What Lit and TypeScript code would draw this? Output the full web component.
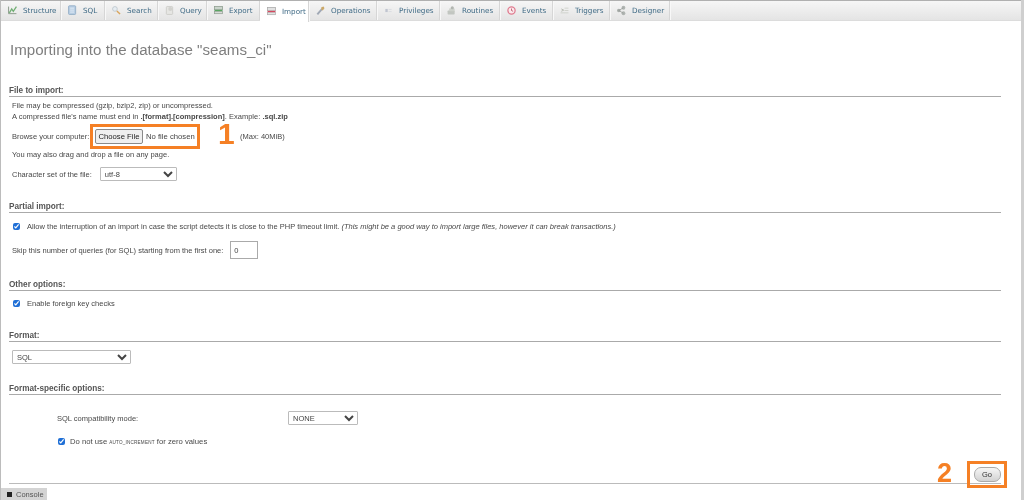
import { LitElement, html, css, svg } from "lit";
import { customElement } from "lit/decorators.js";

const icons: Record<string, unknown> = {
  Structure: svg`<path d="M2 2v9h10" fill="none" stroke="#8a9a8a" stroke-width="1.2"/><path d="M3 10l3-5 2 3 4-6" fill="none" stroke="#6fae72" stroke-width="1.6"/>`,
  SQL: svg`<rect x="2" y="1" width="9" height="11" rx="1" fill="#b9cfe4" stroke="#8ba7c2"/><path d="M4 4h5M4 6.5h5M4 9h5" stroke="#e8f0f8"/>`,
  Search: svg`<circle cx="5" cy="5" r="3" fill="#e6edf2" stroke="#b9c2c8"/><path d="M7.5 7.5l4 4" stroke="#d9a55c" stroke-width="1.8"/>`,
  Query: svg`<rect x="3" y="2" width="8" height="10" rx="1" fill="#e6e6e3" stroke="#c8c8c4"/><circle cx="8" cy="5" r="2.6" fill="#d2d2ce"/>`,
  Export: svg`<rect x="2" y="2" width="10" height="4" fill="#cbd5cc" stroke="#8f9e90"/><rect x="2" y="8" width="10" height="3" fill="#d8dcd8" stroke="#98a299"/><path d="M2 7h10" stroke="#5aa562" stroke-width="1.6"/>`,
  Import: svg`<rect x="2" y="2" width="10" height="4" fill="#e2e2e2" stroke="#aaa"/><rect x="2" y="8" width="10" height="3" fill="#e4e4e4" stroke="#b0b0b0"/><path d="M2 7h10" stroke="#d6485e" stroke-width="1.6"/>`,
  Operations: svg`<path d="M3 12l6-7" stroke="#a0a8b5" stroke-width="2.4"/><path d="M8 3l3-1 1 2-2 3-2-1z" fill="#cba868"/>`,
  Privileges: svg`<rect x="3" y="5" width="3" height="4" fill="#c0c5d0"/><rect x="7" y="5" width="4" height="1" fill="#d6d8de"/><rect x="7" y="8" width="4" height="1" fill="#d6d8de"/>`,
  Routines: svg`<rect x="2" y="7" width="9" height="5" rx="1" fill="#c2c6c1"/><rect x="4" y="4" width="7" height="4" rx="1" fill="#ced2cc"/><circle cx="8" cy="3.5" r="2" fill="#b2b6b1"/>`,
  Events: svg`<circle cx="7" cy="7" r="4.6" fill="#fbe9ec" stroke="#e07c90" stroke-width="1.6"/><path d="M7 4.5V7l2 1" fill="none" stroke="#b8475c"/>`,
  Triggers: svg`<path d="M3 5l3 1.5L3 8" fill="none" stroke="#b6bab0" stroke-width="1.2"/><path d="M7 4h5M7 7h5M2 10h10" stroke="#c9ccc4"/>`,
  Designer: svg`<circle cx="3.5" cy="7" r="2.2" fill="#a8adaa"/><circle cx="9.5" cy="3.5" r="2.4" fill="#b0b5b2"/><circle cx="9.5" cy="10.5" r="2.4" fill="#b0b5b2"/><path d="M3.5 7l6-3.5M3.5 7l6 3.5" stroke="#969b98"/>`,
};

const tabs = Object.keys(icons);
const widths = [60, 44, 53, 49, 53, 49, 68, 63, 60, 53, 57, 60];

@customElement("app-root")
export class AppRoot extends LitElement {
  static styles = css`
    :host {
      display: block;
      position: relative;
      width: 1024px;
      height: 500px;
      overflow: hidden;
      background: #fff;
      font-family: "Liberation Sans", Arial, sans-serif;
      font-size: 7.52px;
      color: #484848;
      filter: blur(0.3px);
    }
    .frame {
      box-sizing: border-box;
      height: 500px;
      width: 1024px;
      border-left: 1px solid #bcbcbc;
      border-right: 3px solid #cfcfcf;
      display: flex;
      flex-direction: column;
    }
    .tabs {
      display: flex;
      height: 21px;
      flex: none;
      box-sizing: border-box;
      border-top: 1px solid #b0b0b0;
      border-bottom: 1px solid #dcdcdc;
      background: linear-gradient(#f6f6f6, #e4e4e4);
    }
    .tab {
      display: flex;
      align-items: center;
      gap: 5px;
      flex: none;
      box-sizing: border-box;
      padding-left: 6px;
      border-right: 1px solid #d6d6d6;
      box-shadow: 1px 0 0 #f8f8f8;
      font-family: "DejaVu Sans", sans-serif;
      font-size: 7.2px;
      color: #3f6a85;
      white-space: nowrap;
    }
    .tab.on {
      background: #fff;
      height: 21px;
    }
    .tab svg {
      width: 11px;
      height: 11px;
      flex: none;
    }
    h1 {
      margin: 20px 0 0 9px;
      font-size: 15.1px;
      line-height: 18px;
      font-weight: 400;
      color: #7e7e7e;
    }
    main {
      flex: 1;
      padding: 0 20px 0 8px;
      display: flex;
      flex-direction: column;
    }
    .legend {
      font-weight: 700;
      font-size: 8.2px;
      line-height: 10px;
      color: #555;
      border-bottom: 1px solid #aaa;
    }
    .sec {
      display: flex;
      flex-direction: column;
    }
    .file { margin-top: 27px; }
    .partial { margin-top: 21px; }
    .other { margin-top: 20px; }
    .format { margin-top: 23px; }
    .specific { margin-top: 20px; }
    .row {
      display: flex;
      align-items: center;
      padding-left: 3px;
      white-space: nowrap;
    }
    .lines {
      line-height: 11px;
      margin-top: 3px;
    }
    .browse { height: 24px; margin-top: 2px; }
    .browse .lab { width: 83px; flex: none; }
    input[type="file"] {
      font: inherit;
      font-size: 7.7px;
      width: 110px;
      flex: none;
      color: #444;
      margin: 0;
    }
    input[type="file"]::file-selector-button {
      font: inherit;
      height: 15px;
      width: 48px;
      padding: 0;
      margin-right: 3px;
      border: 1px solid #8a8a8a;
      border-radius: 2px;
      background: #efefef;
      color: #222;
    }
    .max { margin-left: 35px; }
    .drop { margin-top: 1px; line-height: 11px; }
    .charset { margin-top: 7px; gap: 8px; height: 14px; }
    select {
      font: inherit;
      color: #444;
      height: 14px;
      padding: 0;
      margin: 0;
      border: 1px solid #bbb;
      border-radius: 1px;
      background: #fff;
      box-sizing: border-box;
    }
    .w-cs { width: 77px; }
    .w-fmt { width: 119px; }
    .w-none { width: 70px; }
    .check { gap: 7px; }
    input[type="checkbox"] {
      width: 7px;
      height: 7px;
      margin: 0 0 0 1px;
      accent-color: #1f6fd6;
    }
    .allow { margin-top: 8px; height: 10px; }
    .skip { margin-top: 9px; height: 20px; gap: 7px; }
    .skip input {
      width: 28px;
      height: 18px;
      box-sizing: border-box;
      border: 1px solid #aaa;
      font: inherit;
      padding: 0 3px;
      margin: 0;
      color: #444;
    }
    .fk { margin-top: 7px; height: 10px; }
    .sel { margin-top: 8px; }
    .sql {
      margin-top: 16px;
      padding-left: 48px;
      height: 14px;
    }
    .sql .lab { width: 231px; }
    .zero { margin-top: 11px; padding-left: 48px; height: 10px; gap: 5px; font-size: 7.7px; }
    .tiny { font-size: 4.6px; letter-spacing: 0.2px; }
    .rule {
      margin-top: 37px;
      border-top: 1px solid #bbb;
    }
    .console {
      margin-top: auto;
      width: 46px;
      height: 12px;
      flex: none;
      box-sizing: border-box;
      background: #d4d4d4;
      display: flex;
      align-items: center;
      gap: 4px;
      padding-left: 6px;
      color: #555;
    }
    .console i {
      width: 5px;
      height: 5px;
      background: #222;
    }
    .annot {
      position: absolute;
      color: #f58025;
      font-weight: 700;
      line-height: 28px;
      font-family: "Liberation Sans", sans-serif;
    }
    .n1 { left: 218px; top: 120px; font-size: 30px; }
    .n2 { left: 937px; top: 459px; font-size: 27px; }
    .box {
      position: absolute;
      box-sizing: border-box;
      border: 3.5px solid #f58025;
    }
    .b1 { left: 90px; top: 124px; width: 110px; height: 25px; }
    .b2 { left: 967px; top: 461px; width: 40px; height: 27px; display: flex; align-items: center; justify-content: center; }
    .go {
      font: inherit;
      width: 27px;
      height: 15px;
      padding: 0;
      border: 1px solid #aaa;
      border-radius: 7px;
      background: linear-gradient(#f6f6f6, #d2d2d2);
      color: #333;
    }
  `;

  render() {
    return html`
      <div class="frame">
        <nav class="tabs">
          ${tabs.map(
            (t, i) => html`<div class="tab ${t === "Import" ? "on" : ""}" style="width:${widths[i]}px">
              <svg viewBox="0 0 14 14">${icons[t]}</svg><span>${t}</span>
            </div>`
          )}
        </nav>
        <h1>Importing into the database "seams_ci"</h1>
        <main>
          <section class="sec file">
            <div class="legend">File to import:</div>
            <div class="lines row">
              <div>
                File may be compressed (gzip, bzip2, zip) or uncompressed.<br />
                A compressed file's name must end in <b>.[format].[compression]</b>. Example: <b>.sql.zip</b>
              </div>
            </div>
            <div class="row browse">
              <span class="lab">Browse your computer:</span>
              <input type="file" />
              <span class="max">(Max: 40MiB)</span>
            </div>
            <div class="row drop">You may also drag and drop a file on any page.</div>
            <div class="row charset">
              <span>Character set of the file:</span>
              <select class="w-cs"><option>utf-8</option></select>
            </div>
          </section>

          <section class="sec partial">
            <div class="legend">Partial import:</div>
            <label class="row check allow">
              <input type="checkbox" checked />
              <span>Allow the interruption of an import in case the script detects it is close to the PHP timeout limit. <i>(This might be a good way to import large files, however it can break transactions.)</i></span>
            </label>
            <div class="row skip">
              <span>Skip this number of queries (for SQL) starting from the first one:</span>
              <input type="text" value="0" />
            </div>
          </section>

          <section class="sec other">
            <div class="legend">Other options:</div>
            <label class="row check fk">
              <input type="checkbox" checked />
              <span>Enable foreign key checks</span>
            </label>
          </section>

          <section class="sec format">
            <div class="legend">Format:</div>
            <div class="row sel"><select class="w-fmt"><option>SQL</option></select></div>
          </section>

          <section class="sec specific">
            <div class="legend">Format-specific options:</div>
            <div class="row sql">
              <span class="lab">SQL compatibility mode:</span>
              <select class="w-none"><option>NONE</option></select>
            </div>
            <label class="row check zero">
              <input type="checkbox" checked />
              <span>Do not use <span class="tiny">AUTO_INCREMENT</span> for zero values</span>
            </label>
          </section>

          <div class="rule"></div>
        </main>
        <div class="console"><i></i><span>Console</span></div>
      </div>
      <div class="box b1"></div>
      <div class="annot n1">1</div>
      <div class="annot n2">2</div>
      <div class="box b2"><button class="go">Go</button></div>
    `;
  }
}
